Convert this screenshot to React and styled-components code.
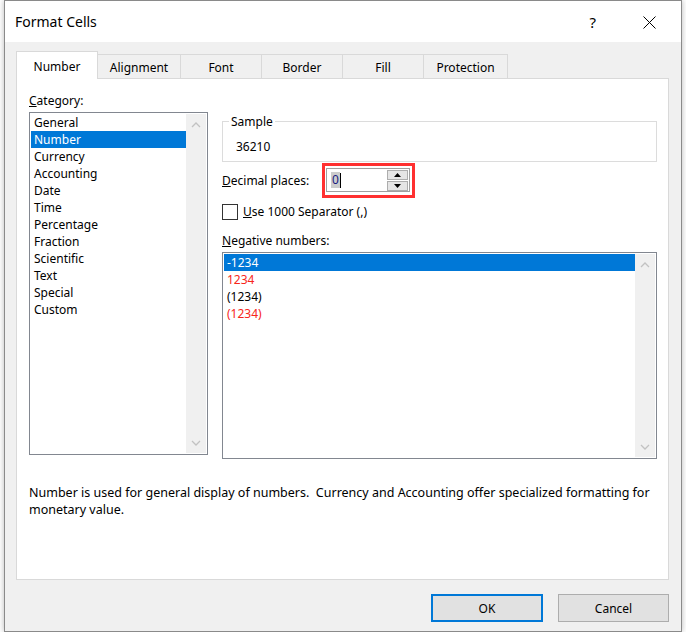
import React from "react";
import styled, { createGlobalStyle } from "styled-components";

const GlobalStyle = createGlobalStyle`
  html, body {
    margin: 0;
    padding: 0;
    background: #ffffff;
  }
  body {
    font-family: "Noto Sans", "Open Sans", sans-serif;
    font-size: 12px;
    color: #000;
  }
  * {
    box-sizing: border-box;
  }
`;

const Window = styled.div`
  width: 678px;
  height: 632px;
  margin: 0 4px;
  border: 1px solid #8a8a8a;
  background: #f0f0f0;
  box-shadow: 0 0 6px rgba(0, 0, 0, 0.28);
  display: flex;
  flex-direction: column;
`;

const TitleBar = styled.div`
  height: 41px;
  background: #ffffff;
  display: flex;
  align-items: center;
  padding: 1px 0 0 10px;
`;

const Title = styled.div`
  flex: 1;
  font-size: 14px;
  line-height: 20px;
`;

const HelpGlyph = styled.span`
  font-size: 15px;
  line-height: 20px;
  margin-right: 47px;
`;

const CloseGlyph = styled.svg`
  width: 13px;
  height: 13px;
  margin-right: 25px;
`;

const Body = styled.div`
  flex: 1;
  display: flex;
  flex-direction: column;
  padding: 9px 12px 9px 11px;
`;

const TabStrip = styled.div`
  display: flex;
  height: 28px;
  margin-bottom: -1px;
  position: relative;
  z-index: 1;
`;

const Tab = styled.div`
  width: ${(p) => p.$w}px;
  height: ${(p) => (p.$active ? 28 : 25)}px;
  margin-top: ${(p) => (p.$active ? 0 : 3)}px;
  margin-right: -1px;
  border: 1px solid #d9d9d9;
  border-bottom: ${(p) => (p.$active ? "none" : "1px solid #d9d9d9")};
  background: ${(p) => (p.$active ? "#ffffff" : "#f0f0f0")};
  position: relative;
  z-index: ${(p) => (p.$active ? 2 : 1)};
  display: flex;
  align-items: center;
  justify-content: center;
  padding-top: 2px;
  line-height: 17px;
`;

const Panel = styled.div`
  width: 653px;
  height: 502px;
  background: #ffffff;
  border: 1px solid #d9d9d9;
  padding: 13px 11px 0 12px;
`;

const Columns = styled.div`
  display: grid;
  grid-template-columns: 179px 435px;
  column-gap: 14px;
  align-items: start;
`;

const Column = styled.div`
  display: flex;
  flex-direction: column;
`;

const Label = styled.div`
  line-height: ${(p) => p.$lh || 17}px;
  margin-top: ${(p) => p.$top || 0}px;
  margin-bottom: ${(p) => p.$bottom || 0}px;
  white-space: nowrap;
`;

const ListBox = styled.div`
  height: ${(p) => p.$h}px;
  border: 1px solid #828790;
  padding: 1px;
  display: flex;
  background: #ffffff;
`;

const ListItems = styled.div`
  flex: 1;
  display: flex;
  flex-direction: column;
`;

const ListItem = styled.div`
  height: 17px;
  line-height: 18px;
  padding-left: 3px;
  white-space: nowrap;
  background: ${(p) => (p.$selected ? "#0078d7" : "transparent")};
  color: ${(p) => (p.$selected ? "#ffffff" : p.$red ? "#f7261a" : "#000000")};
`;

const ScrollBar = styled.div`
  width: 20px;
  background: #f0f0f0;
  display: flex;
  flex-direction: column;
  justify-content: space-between;
`;

const ScrollArrow = styled.div`
  height: 21px;
  display: flex;
  align-items: center;
  justify-content: center;
`;

const Group = styled.fieldset`
  margin: 21px 0 0 0;
  padding: 8px 12px 6px 13px;
  border: 1px solid #dcdcdc;
  min-width: 0;
`;

const Legend = styled.legend`
  padding: 0 2px;
  margin-left: -7px;
  line-height: 17px;
`;

const SampleValue = styled.div`
  line-height: 17px;
`;

const FieldRow = styled.div`
  display: flex;
  align-items: center;
  margin-top: ${(p) => p.$top || 0}px;
`;

const FieldLabel = styled.div`
  width: 100px;
  line-height: 17px;
`;

const Highlight = styled.div`
  border: 3px solid #ff3030;
  padding: 2px 2px 3px 1px;
`;

const SpinInput = styled.div`
  width: 84px;
  height: 24px;
  border: 1px solid #a0a0a0;
  background: #ffffff;
  display: flex;
  align-items: center;
  padding-left: 4px;
`;

const SpinText = styled.div`
  flex: 1;
  display: flex;
  align-items: center;
`;

const SelectedText = styled.span`
  background: #cccccc;
  color: #1a1a80;
  line-height: 16px;
  padding: 0 1px;
`;

const Caret = styled.span`
  width: 1px;
  height: 15px;
  background: #000;
`;

const Spinner = styled.div`
  width: 21px;
  height: 21px;
  margin-right: 1px;
  display: flex;
  flex-direction: column;
  gap: 1px;
`;

const SpinButton = styled.div`
  flex: 1;
  background: #e5e5e5;
  border: 1px solid #adadad;
  display: flex;
  align-items: center;
  justify-content: center;
`;

const CheckBox = styled.div`
  width: 16px;
  height: 16px;
  border: 1px solid #333333;
  background: #ffffff;
  margin-right: 5px;
`;

const Description = styled.div`
  margin-top: 25px;
  font-size: 12.5px;
  line-height: 17px;
`;

const Footer = styled.div`
  display: flex;
  justify-content: flex-end;
  gap: 15px;
  margin-top: 14px;
`;

const Button = styled.button`
  width: ${(p) => p.$w}px;
  height: 28px;
  background: #e1e1e1;
  border: ${(p) => (p.$default ? "2px solid #0078d7" : "1px solid #adadad")};
  font-family: inherit;
  font-size: 12px;
  color: #000;
  padding: 0;
`;

const Chevron = ({ down }) => (
  <svg width="10" height="6" viewBox="0 0 10 6">
    <polyline
      points={down ? "1,1 5,5 9,1" : "1,5 5,1 9,5"}
      fill="none"
      stroke="#c2c2c2"
      strokeWidth="1.3"
    />
  </svg>
);

const Triangle = ({ down }) => (
  <svg width="7" height="4" viewBox="0 0 7 4">
    <polygon points={down ? "0,0 7,0 3.5,4" : "0,4 7,4 3.5,0"} fill="#000" />
  </svg>
);

const tabs = [
  { name: "Number", w: 82 },
  { name: "Alignment", w: 84 },
  { name: "Font", w: 82 },
  { name: "Border", w: 82 },
  { name: "Fill", w: 82 },
  { name: "Protection", w: 85 },
];

const categories = [
  "General",
  "Number",
  "Currency",
  "Accounting",
  "Date",
  "Time",
  "Percentage",
  "Fraction",
  "Scientific",
  "Text",
  "Special",
  "Custom",
];

const negatives = [
  { text: "-1234", selected: true },
  { text: "1234", red: true },
  { text: "(1234)" },
  { text: "(1234)", red: true },
];

const Scroll = () => (
  <ScrollBar>
    <ScrollArrow>
      <Chevron />
    </ScrollArrow>
    <ScrollArrow>
      <Chevron down />
    </ScrollArrow>
  </ScrollBar>
);

export default function App() {
  return (
    <>
      <GlobalStyle />
      <Window>
        <TitleBar>
          <Title>Format Cells</Title>
          <HelpGlyph>?</HelpGlyph>
          <CloseGlyph viewBox="0 0 13 13">
            <path d="M0.5 0.5 L12.5 12.5 M12.5 0.5 L0.5 12.5" stroke="#000" strokeWidth="1" />
          </CloseGlyph>
        </TitleBar>
        <Body>
          <TabStrip>
            {tabs.map((t, i) => (
              <Tab key={t.name} $w={t.w} $active={i === 0}>
                {t.name}
              </Tab>
            ))}
          </TabStrip>
          <Panel>
            <Columns>
              <Column>
                <Label $bottom={3}>
                  <u>C</u>ategory:
                </Label>
                <ListBox $h={343}>
                  <ListItems>
                    {categories.map((c) => (
                      <ListItem key={c} $selected={c === "Number"}>
                        {c}
                      </ListItem>
                    ))}
                  </ListItems>
                  <Scroll />
                </ListBox>
              </Column>
              <Column>
                <Group>
                  <Legend>Sample</Legend>
                  <SampleValue>36210</SampleValue>
                </Group>
                <FieldRow $top={1}>
                  <FieldLabel>
                    <u>D</u>ecimal places:
                  </FieldLabel>
                  <Highlight>
                    <SpinInput>
                      <SpinText>
                        <SelectedText>0</SelectedText>
                        <Caret />
                      </SpinText>
                      <Spinner>
                        <SpinButton>
                          <Triangle />
                        </SpinButton>
                        <SpinButton>
                          <Triangle down />
                        </SpinButton>
                      </Spinner>
                    </SpinInput>
                  </Highlight>
                </FieldRow>
                <FieldRow $top={6}>
                  <CheckBox />
                  <Label $lh={16}>
                    <u>U</u>se 1000 Separator (,)
                  </Label>
                </FieldRow>
                <Label $top={12} $bottom={3}>
                  <u>N</u>egative numbers:
                </Label>
                <ListBox $h={207}>
                  <ListItems>
                    {negatives.map((n, i) => (
                      <ListItem key={i} $selected={n.selected} $red={n.red}>
                        {n.text}
                      </ListItem>
                    ))}
                  </ListItems>
                  <Scroll />
                </ListBox>
              </Column>
            </Columns>
            <Description>
              Number is used for general display of numbers.&nbsp; Currency and
              Accounting offer specialized formatting for
              <br />
              monetary value.
            </Description>
          </Panel>
          <Footer>
            <Button $w={112} $default>
              OK
            </Button>
            <Button $w={111}>Cancel</Button>
          </Footer>
        </Body>
      </Window>
    </>
  );
}
